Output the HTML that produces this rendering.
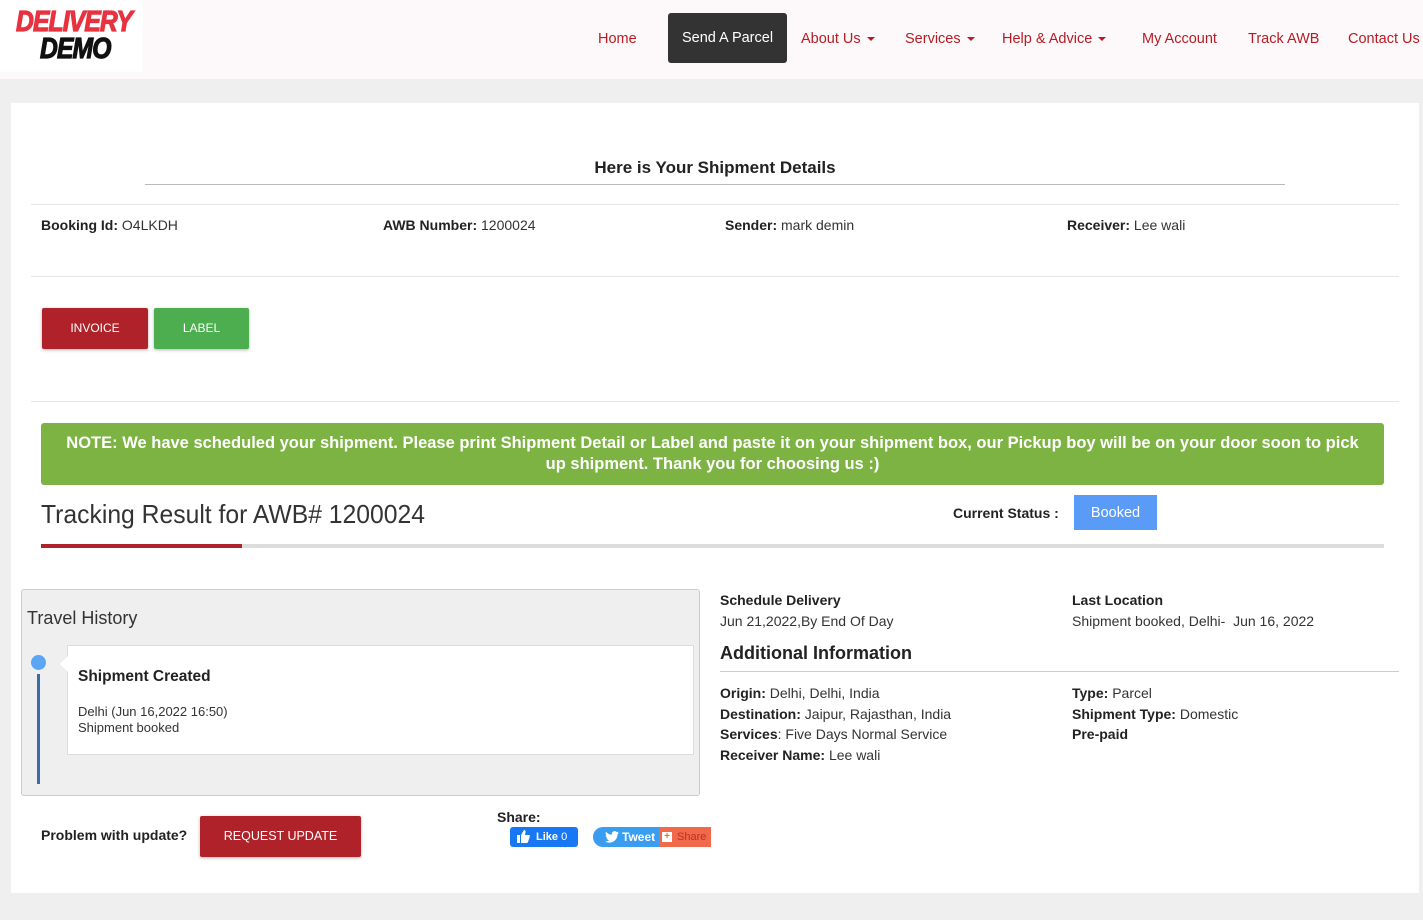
<!DOCTYPE html>
<html><head><meta charset="utf-8"><style>
*{box-sizing:border-box;margin:0;padding:0}
body{width:1423px;height:920px;background:#efefef;font-family:"Liberation Sans",sans-serif;color:#333;position:relative;overflow:hidden;font-size:14px}
.a{position:absolute}
.hdr{left:0;top:0;width:1423px;height:79px;background:#fdf9fa}
.logo{left:0;top:0;width:143px;height:72px;background:#fff}
.nav{top:31px;color:#b71c24;font-size:14.5px}
.caret{display:inline-block;border-top:4px solid #b71c24;border-left:4px solid transparent;border-right:4px solid transparent;vertical-align:middle;margin-left:6px}
.card{left:11px;top:103px;width:1408px;height:790px;background:#fff}
.hr{height:1px;background:#e6e6e6}
b{font-weight:bold;color:#222}
.btn{color:#fff;font-size:12px;text-align:center;border-radius:2px;box-shadow:0 1px 3px rgba(0,0,0,.3)}
.lg{font:italic 900 29px/1 'Liberation Sans',sans-serif;letter-spacing:-1px;transform:scaleX(.85);transform-origin:left;-webkit-text-stroke:1.2px currentColor}
</style></head><body>
<div class="a hdr"></div>
<div class="a logo"></div>
<div class="a lg" style="left:16px;top:8px;color:#e8323f">DELIVERY</div>
<div class="a lg" style="left:40px;top:35px;color:#111">DEMO</div>
<div class="a nav" style="left:598px">Home</div>
<div class="a" style="left:668px;top:13px;width:119px;height:50px;background:#333;border-radius:3px;color:#fff;font-size:14.5px;text-align:center;line-height:50px">Send A Parcel</div>
<div class="a nav" style="left:801px">About Us<span class="caret"></span></div>
<div class="a nav" style="left:905px">Services<span class="caret"></span></div>
<div class="a nav" style="left:1002px">Help &amp; Advice<span class="caret"></span></div>
<div class="a nav" style="left:1142px">My Account</div>
<div class="a nav" style="left:1248px">Track AWB</div>
<div class="a nav" style="left:1348px">Contact Us</div>

<div class="a card"></div>
<div class="a" style="left:145px;top:158px;width:1140px;text-align:center;font-size:17px;font-weight:bold;color:#222">Here is Your Shipment Details</div>
<div class="a hr" style="left:145px;top:184px;width:1140px;background:#bbb"></div>
<div class="a hr" style="left:31px;top:204px;width:1368px"></div>
<div class="a" style="left:41px;top:217px"><b>Booking Id:</b> O4LKDH</div>
<div class="a" style="left:383px;top:217px"><b>AWB Number:</b> 1200024</div>
<div class="a" style="left:725px;top:217px"><b>Sender:</b> mark demin</div>
<div class="a" style="left:1067px;top:217px"><b>Receiver:</b> Lee wali</div>
<div class="a hr" style="left:31px;top:276px;width:1368px"></div>
<div class="a btn" style="left:42px;top:308px;width:106px;height:41px;line-height:41px;background:#b0222a">INVOICE</div>
<div class="a btn" style="left:154px;top:308px;width:95px;height:41px;line-height:41px;background:#4cae4f">LABEL</div>
<div class="a hr" style="left:31px;top:401px;width:1368px"></div>
<div class="a" style="left:41px;top:423px;width:1343px;height:62px;background:#7cb342;border-radius:3px;color:#fff;font-weight:bold;font-size:16.5px;text-align:center;padding:10px 14px;line-height:21px">NOTE: We have scheduled your shipment. Please print Shipment Detail or Label and paste it on your shipment box, our Pickup boy will be on your door soon to pick up shipment. Thank you for choosing us :)</div>
<div class="a" style="left:41px;top:499px;font-size:26px;color:#333;transform:scaleX(.95);transform-origin:left">Tracking Result for AWB# 1200024</div>
<div class="a" style="left:953px;top:505px;font-weight:bold;color:#222">Current Status :</div>
<div class="a" style="left:1074px;top:495px;width:83px;height:35px;background:#5b9bf8;color:#fff;text-align:center;line-height:36px;font-size:14.5px">Booked</div>
<div class="a" style="left:41px;top:544px;width:1343px;height:4px;background:#ddd"></div>
<div class="a" style="left:41px;top:544px;width:201px;height:4px;background:#b0222a"></div>

<div class="a" style="left:21px;top:589px;width:679px;height:207px;background:#efefef;border:1px solid #ccc;border-radius:3px"></div>
<div class="a" style="left:27px;top:608px;font-size:18px;color:#333">Travel History</div>
<div class="a" style="left:37px;top:674px;width:3px;height:110px;background:#3a6da8"></div>
<div class="a" style="left:31px;top:655px;width:15px;height:15px;border-radius:50%;background:#5aa6f5"></div>
<div class="a" style="left:67px;top:645px;width:627px;height:110px;background:#fff;border:1px solid #ddd"></div>
<div class="a" style="left:60px;top:656px;width:0;height:0;border-top:8px solid transparent;border-bottom:8px solid transparent;border-right:8px solid #fff"></div>
<div class="a" style="left:78px;top:668px;font-size:15.5px;font-weight:bold;color:#222">Shipment Created</div>
<div class="a" style="left:78px;top:704px;font-size:13px;line-height:16px">Delhi (Jun 16,2022 16:50)<br>Shipment booked</div>

<div class="a" style="left:720px;top:590px;line-height:21px"><b>Schedule Delivery</b><br>Jun 21,2022,By End Of Day</div>
<div class="a" style="left:1072px;top:590px;line-height:21px"><b>Last Location</b><br>Shipment booked, Delhi-&nbsp; Jun 16, 2022</div>
<div class="a" style="left:720px;top:643px;font-size:18px;font-weight:bold;color:#222">Additional Information</div>
<div class="a hr" style="left:720px;top:671px;width:679px;background:#ccc"></div>
<div class="a" style="left:720px;top:683px;line-height:20.5px"><b>Origin:</b> Delhi, Delhi, India<br><b>Destination:</b> Jaipur, Rajasthan, India<br><b>Services</b>: Five Days Normal Service<br><b>Receiver Name:</b> Lee wali</div>
<div class="a" style="left:1072px;top:683px;line-height:20.5px"><b>Type:</b> Parcel<br><b>Shipment Type:</b> Domestic<br><b>Pre-paid</b></div>

<div class="a" style="left:41px;top:827px;font-weight:bold;color:#222">Problem with update?</div>
<div class="a btn" style="left:200px;top:816px;width:161px;height:41px;line-height:41px;background:#b0222a;font-size:12.5px">REQUEST UPDATE</div>
<div class="a" style="left:497px;top:809px;font-weight:bold;color:#222">Share:</div>
<div class="a" style="left:510px;top:827px;width:68px;height:20px;background:#1877f2;border-radius:3px;color:#fff;font-size:11px;font-weight:bold;line-height:20px;padding-left:26px">Like <span style="font-weight:normal">0</span></div>
<svg class="a" style="left:517px;top:830px" width="13" height="13" viewBox="0 0 13 13"><path d="M0 5h3v8H0zM4 5l3-5c1 0 2 1 1.5 2.5L8 5h4c1 0 1 1 .8 1.5L11 12c-.2.6-.6 1-1.2 1H4z" fill="#fff"/></svg>
<div class="a" style="left:593px;top:827px;width:66px;height:20px;background:#3a9df0;border-radius:10px 0 0 10px;color:#fff;font-size:12px;font-weight:bold;line-height:20px;padding-left:29px">Tweet</div>
<svg class="a" style="left:605px;top:831px" width="14" height="12" viewBox="0 0 24 20"><path d="M24 2.4c-.9.4-1.8.6-2.8.8 1-.6 1.8-1.6 2.2-2.7-1 .6-2 1-3.1 1.2C19.3.7 18 0 16.6 0c-2.7 0-4.9 2.2-4.9 4.9 0 .4 0 .8.1 1.1C7.7 5.8 4.1 3.9 1.7.9c-.4.7-.7 1.6-.7 2.5 0 1.7.9 3.2 2.2 4.1-.8 0-1.6-.2-2.2-.6v.1c0 2.4 1.7 4.4 3.9 4.8-.4.1-.8.2-1.3.2-.3 0-.6 0-.9-.1.6 2 2.4 3.4 4.6 3.4-1.7 1.3-3.8 2.1-6.1 2.1H0c2.2 1.4 4.8 2.2 7.5 2.2 9.1 0 14-7.5 14-14v-.6c1-.7 1.8-1.6 2.5-2.6z" fill="#fff"/></svg>
<div class="a" style="left:659px;top:827px;width:52px;height:20px;background:#f0694a;color:#b8312a;font-size:11px;line-height:20px;padding-left:18px">Share</div>
<div class="a" style="left:662px;top:832px;width:10px;height:10px;background:#fff;color:#f0694a;font-size:10px;line-height:10px;text-align:center;font-weight:bold">+</div>
</body></html>
